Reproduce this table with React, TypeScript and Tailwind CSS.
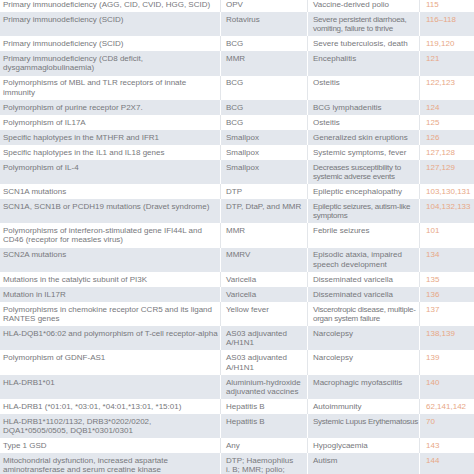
import React from 'react';

type Row = { a: string[]; b: string[]; c: string[]; refs: string };

const rows: Row[] = [
    { a: ['Primary immunodeficiency (AGG, CID, CVID, HGG, SCID)'], b: ['OPV'], c: ['Vaccine-derived polio'], refs: '115' },
    { a: ['Primary immunodeficiency (SCID)'], b: ['Rotavirus'], c: ['Severe persistent diarrhoea,', 'vomiting, failure to thrive'], refs: '116–118' },
    { a: ['Primary immunodeficiency (SCID)'], b: ['BCG'], c: ['Severe tuberculosis, death'], refs: '119,120' },
    { a: ['Primary immunodeficiency (CD8 deficit,', 'dysgammaglobulinaemia)'], b: ['MMR'], c: ['Encephalitis'], refs: '121' },
    { a: ['Polymorphisms of MBL and TLR receptors of innate', 'immunity'], b: ['BCG'], c: ['Osteitis'], refs: '122,123' },
    { a: ['Polymorphism of purine receptor P2X7.'], b: ['BCG'], c: ['BCG lymphadenitis'], refs: '124' },
    { a: ['Polymorphism of IL17A'], b: ['BCG'], c: ['Osteitis'], refs: '125' },
    { a: ['Specific haplotypes in the MTHFR and IFR1'], b: ['Smallpox'], c: ['Generalized skin eruptions'], refs: '126' },
    { a: ['Specific haplotypes in the IL1 and IL18 genes'], b: ['Smallpox'], c: ['Systemic symptoms, fever'], refs: '127,128' },
    { a: ['Polymorphism of IL-4'], b: ['Smallpox'], c: ['Decreases susceptibility to', 'systemic adverse events'], refs: '127,129' },
    { a: ['SCN1A mutations'], b: ['DTP'], c: ['Epileptic encephalopathy'], refs: '103,130,131' },
    { a: ['SCN1A, SCN1B or PCDH19 mutations (Dravet syndrome)'], b: ['DTP, DtaP, and MMR'], c: ['Epileptic seizures, autism-like', 'symptoms'], refs: '104,132,133' },
    { a: ['Polymorphisms of interferon-stimulated gene IFI44L and', 'CD46 (receptor for measles virus)'], b: ['MMR'], c: ['Febrile seizures'], refs: '101' },
    { a: ['SCN2A mutations'], b: ['MMRV'], c: ['Episodic ataxia, impaired', 'speech development'], refs: '134' },
    { a: ['Mutations in the catalytic subunit of PI3K'], b: ['Varicella'], c: ['Disseminated varicella'], refs: '135' },
    { a: ['Mutation in IL17R'], b: ['Varicella'], c: ['Disseminated varicella'], refs: '136' },
    { a: ['Polymorphisms in chemokine receptor CCR5 and its ligand', 'RANTES genes'], b: ['Yellow fever'], c: ['Viscerotropic disease, multiple-', 'organ system failure'], refs: '137' },
    { a: ['HLA-DQB1*06:02 and polymorphism of T-cell receptor-alpha'], b: ['AS03 adjuvanted', 'A/H1N1'], c: ['Narcolepsy'], refs: '138,139' },
    { a: ['Polymorphism of GDNF-AS1'], b: ['AS03 adjuvanted', 'A/H1N1'], c: ['Narcolepsy'], refs: '139' },
    { a: ['HLA-DRB1*01'], b: ['Aluminium-hydroxide', 'adjuvanted vaccines'], c: ['Macrophagic myofasciitis'], refs: '140' },
    { a: ['HLA-DRB1 (*01:01, *03:01, *04:01,*13:01, *15:01)'], b: ['Hepatitis B'], c: ['Autoimmunity'], refs: '62,141,142' },
    { a: ['HLA-DRB1*1102/1132, DRB3*0202/0202,', 'DQA1*0505/0505, DQB1*0301/0301'], b: ['Hepatitis B'], c: ['Systemic Lupus Erythematosus'], refs: '70' },
    { a: ['Type 1 GSD'], b: ['Any'], c: ['Hypoglycaemia'], refs: '143' },
    { a: ['Mitochondrial dysfunction, increased aspartate', 'aminotransferase and serum creatine kinase'], b: ['DTP; Haemophilus', 'i. B; MMR; polio;', 'varicella'], c: ['Autism'], refs: '144' },
];

function Lines({ lines }: { lines: string[] }) {
    return (
        <>
            {lines.map((l, i) => (
                <div key={i} className="whitespace-nowrap">{l}</div>
            ))}
        </>
    );
}

export default function App() {
    return (
        <div className="w-[474px] h-[474px] overflow-hidden bg-white font-['Liberation_Sans',Arial,sans-serif] text-[8px] leading-[9.3px] text-[#77787c]">
            <div className="-mt-[3px]">
                {rows.map((r, i) => {
                    const shaded = i % 2 === 1;
                    const bg = shaded ? 'bg-[#e3e7ed]' : 'bg-white';
                    const line = shaded ? 'border-white' : 'border-[#e3e6ea]';
                    return (
                        <div key={i} className={`grid grid-cols-[221px_87px_112px_54px] ${bg}`}>
                            <div className={`pl-[3px] py-[2.85px] border-r ${line} overflow-hidden`}><Lines lines={r.a} /></div>
                            <div className={`pl-[5px] py-[2.85px] border-r ${line} overflow-hidden`}><Lines lines={r.b} /></div>
                            <div className={`pl-[5px] py-[2.85px] border-r ${line} overflow-hidden ${r.c[0].length > 26 ? 'tracking-[-0.25px]' : ''}`}><Lines lines={r.c} /></div>
                            <div className="pl-[6px] py-[2.85px] whitespace-nowrap text-[#e8a886]">{r.refs}</div>
                        </div>
                    );
                })}
            </div>
        </div>
    );
}
